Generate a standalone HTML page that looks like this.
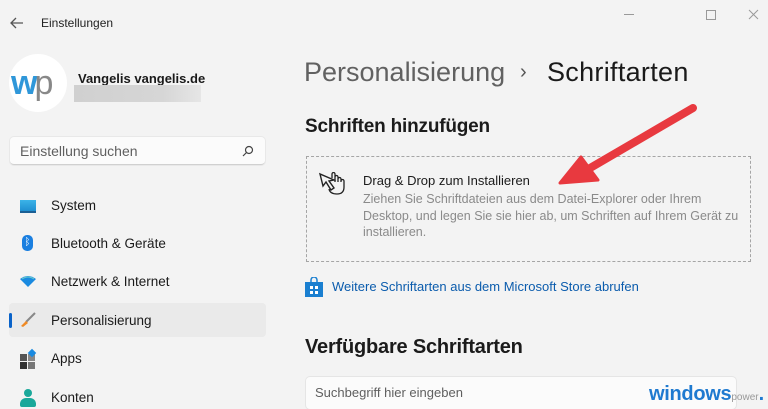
<!DOCTYPE html>
<html><head><meta charset="utf-8"><style>
body{margin:0;width:768px;height:407px;overflow:hidden;background:#f3f3f3;font-family:"Liberation Sans",sans-serif;position:relative;color:#1a1a1a}
.a{position:absolute;white-space:nowrap}
.nav{position:absolute;left:51px;font-size:13.5px;color:#1b1b1b}
.sub{font-size:12.5px;color:#8a8a8a;line-height:16.5px}
</style></head><body>
<svg class="a" style="left:9px;top:16px" width="16" height="14"><path d="M14 7H2M7 2L2 7l5 5" stroke="#555" stroke-width="1.3" fill="none"/></svg>
<div class="a" style="left:41px;top:16px;font-size:12px;color:#222">Einstellungen</div>
<div class="a" style="left:624px;top:14px;width:10px;height:1px;background:#999"></div>
<div class="a" style="left:706px;top:10px;width:8px;height:8px;border:1px solid #999"></div>
<svg class="a" style="left:748px;top:9px" width="11" height="11"><path d="M1 1l9 9M10 1l-9 9" stroke="#999" stroke-width="1"/></svg>
<div class="a" style="left:9px;top:54px;width:58px;height:58px;border-radius:50%;background:#fff"></div>
<div class="a" style="left:11px;top:64px;font-size:34px;font-weight:bold;letter-spacing:-3px;color:#2f97d9">w<span style="color:#888;font-weight:normal">p</span></div>
<div class="a" style="left:78px;top:71px;font-size:13px;font-weight:bold">Vangelis vangelis.de</div>
<div class="a" style="left:74px;top:85px;width:127px;height:17px;background:linear-gradient(90deg,#d0d0d0,#d6d6d6 70%,#e6e6e6)"></div>
<div class="a" style="left:10px;top:137px;width:255px;height:27px;background:#fbfbfb;border-radius:4px;border-bottom:1px solid #d0d0d0;box-shadow:0 0 0 1px #e8e8e8"></div>
<div class="a" style="left:20px;top:143px;font-size:14px;color:#5f5f5f">Einstellung suchen</div>
<svg class="a" style="left:242px;top:145px" width="12" height="12"><circle cx="7" cy="5" r="3.5" stroke="#444" fill="none" stroke-width="1.2"/><path d="M4.5 7.5L1 11" stroke="#444" stroke-width="1.2"/></svg>
<div class="a" style="left:9px;top:303px;width:257px;height:34px;background:#eaeaea;border-radius:4px"></div>
<div class="a" style="left:9px;top:313px;width:3px;height:15px;background:#0a63c9;border-radius:2px"></div>
<div class="a" style="left:20px;top:200px;width:16px;height:11px;background:linear-gradient(#3bb3e8,#1f8fd0);border-bottom:2px solid #1a5f94"></div>
<div class="nav" style="top:198px">System</div>
<div class="a" style="left:22px;top:235px;width:11px;height:16px;background:#1a7fe0;border-radius:5px;color:#fff;font-size:10px;text-align:center;line-height:16px">ᛒ</div>
<div class="nav" style="top:236px">Bluetooth &amp; Geräte</div>
<svg class="a" style="left:20px;top:276px" width="16" height="12"><path d="M0 3Q8-3 16 3L8 11Z" fill="#1a8ae0"/><path d="M2 3Q8-1 14 3" stroke="#6cc" fill="none"/></svg>
<div class="nav" style="top:274px">Netzwerk &amp; Internet</div>
<svg class="a" style="left:20px;top:312px" width="16" height="16"><path d="M15 1L6 10" stroke="#888" stroke-width="2"/><path d="M6 9l2 2-5 4-2-1z" fill="#f08a24"/></svg>
<div class="nav" style="top:313px">Personalisierung</div>
<div class="a" style="left:20px;top:354px;width:7px;height:7px;background:#555"></div><div class="a" style="left:28px;top:354px;width:7px;height:7px;background:#888"></div><div class="a" style="left:20px;top:362px;width:7px;height:7px;background:#333"></div><div class="a" style="left:28px;top:362px;width:7px;height:7px;background:#777"></div><div class="a" style="left:29px;top:350px;width:6px;height:6px;background:#1a8ae0;transform:rotate(45deg)"></div>
<div class="nav" style="top:351px">Apps</div>
<div class="a" style="left:24px;top:389px;width:8px;height:8px;border-radius:50%;background:#1aa89a"></div><div class="a" style="left:20px;top:398px;width:16px;height:9px;border-radius:6px 6px 2px 2px;background:#1aa89a"></div>
<div class="nav" style="top:390px">Konten</div>

<div class="a" style="left:304px;top:57px;font-size:27px;color:#616161">Personalisierung</div>
<div class="a" style="left:520px;top:61px;font-size:20px;color:#555">›</div>
<div class="a" style="left:547px;top:57px;font-size:27px;color:#1a1a1a;letter-spacing:0.3px">Schriftarten</div>
<div class="a" style="left:305px;top:116px;font-size:19px;font-weight:bold;color:#1b1b1b;letter-spacing:-0.2px">Schriften hinzufügen</div>
<div class="a" style="left:306px;top:156px;width:443px;height:104px;border:1px dashed #a5a5a5"></div>
<svg class="a" style="left:318px;top:172px" width="32" height="26"><path d="M2 2l3 12 3-4 5 8 3-2-5-7 5-1z" fill="none" stroke="#222" stroke-width="1.4"/><path d="M14 6v-4a1.3 1.3 0 0 1 3 0v8m0-5a1.3 1.3 0 0 1 3 0v5m0-3a1.3 1.3 0 0 1 3 0v3m0-1a1.3 1.3 0 0 1 3 0v6q0 7-7 7t-8-5" fill="none" stroke="#222" stroke-width="1.3"/></svg>
<div class="a" style="left:363px;top:173px;font-size:13px;color:#1b1b1b">Drag &amp; Drop zum Installieren</div>
<div class="a sub" style="left:363px;top:191px">Ziehen Sie Schriftdateien aus dem Datei-Explorer oder Ihrem<br>Desktop, und legen Sie sie hier ab, um Schriften auf Ihrem Gerät zu<br>installieren.</div>
<svg class="a" style="left:305px;top:277px" width="18" height="20"><path d="M6 5V3a3 3 0 0 1 6 0v2" stroke="#1a7fd0" fill="none" stroke-width="1.5"/><rect x="0" y="5" width="18" height="15" fill="#1a7fd0"/><path d="M5 9h3v3H5zM10 9h3v3h-3zM5 14h3v3H5zM10 14h3v3h-3z" fill="#fff"/></svg>
<div class="a" style="left:332px;top:279px;font-size:13px;color:#0b5cad">Weitere Schriftarten aus dem Microsoft Store abrufen</div>
<div class="a" style="left:305px;top:336px;font-size:20px;font-weight:bold;color:#1b1b1b;letter-spacing:-0.2px">Verfügbare Schriftarten</div>
<div class="a" style="left:306px;top:377px;width:430px;height:32px;background:#fbfbfb;border-radius:4px;box-shadow:0 0 0 1px #e5e5e5"></div>
<div class="a" style="left:315px;top:385px;font-size:13px;color:#5f5f5f">Suchbegriff hier eingeben</div>
<div class="a" style="left:649px;top:383px;font-size:20px;font-weight:bold;color:#1f7ad0;letter-spacing:-0.3px">windows<span style="font-size:10px;color:#999;font-weight:normal;letter-spacing:0">power</span><span style="color:#1f7ad0">.</span></div>
<svg class="a" style="left:0;top:0" width="768" height="407"><path d="M693 108L585 171" stroke="#e8393f" stroke-width="8" stroke-linecap="round"/><path d="M560 183L581 157 598 180Z" fill="#e8393f" stroke="#e8393f" stroke-width="3" stroke-linejoin="round"/></svg>
</body></html>
